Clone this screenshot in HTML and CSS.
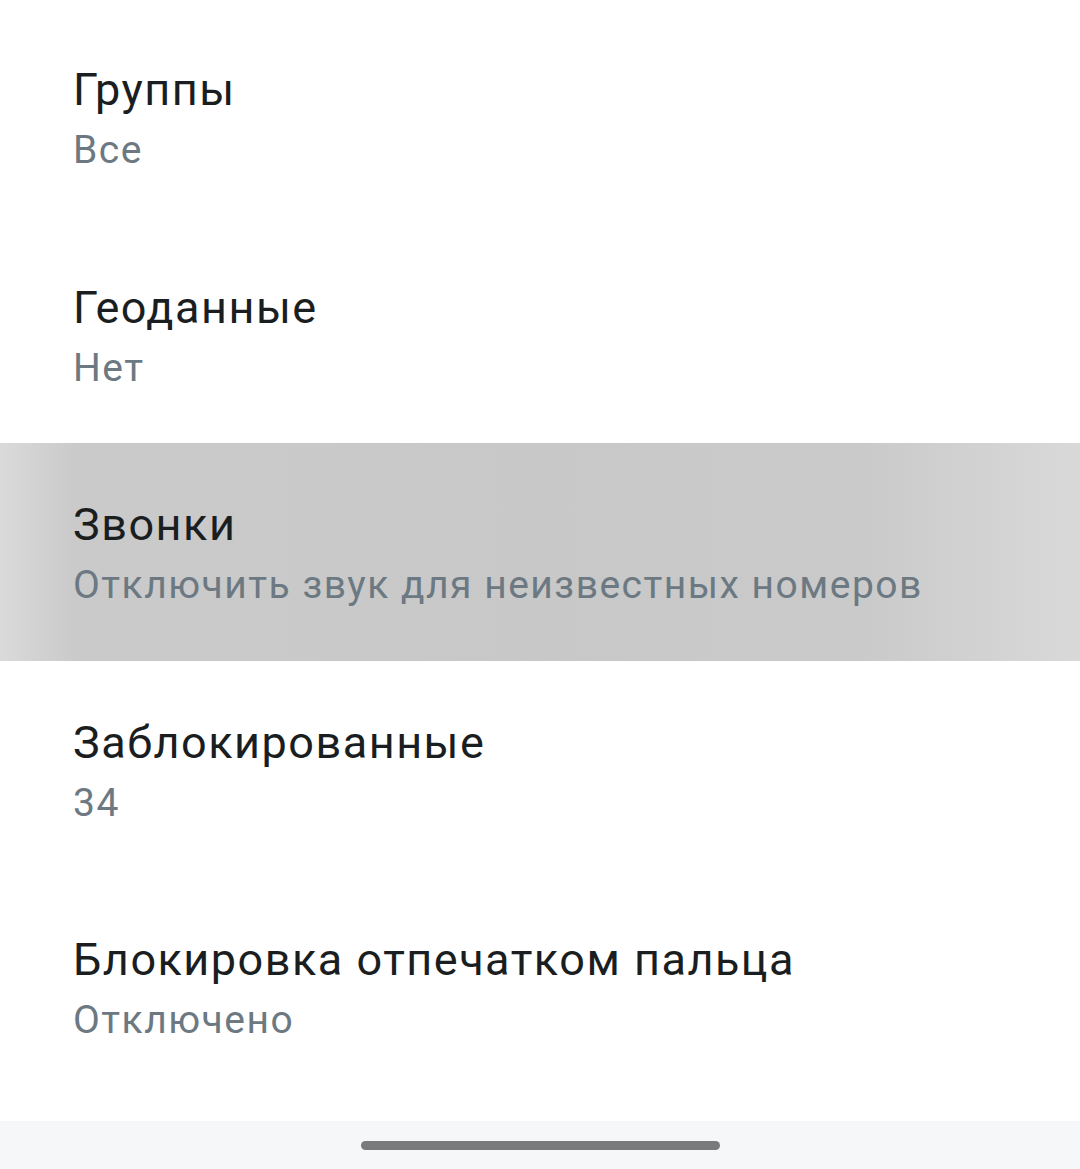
FILE: index.html
```html
<!DOCTYPE html>
<html lang="ru">
<head>
<meta charset="utf-8">
<link rel="stylesheet" href="styles.css">
</head>
<body>
<div class="screen">
  <ul class="list">
    <li class="item"><div class="title">Группы</div><div class="sub">Все</div></li>
    <li class="item"><div class="title">Геоданные</div><div class="sub">Нет</div></li>
    <li class="item pressed"><div class="title">Звонки</div><div class="sub">Отключить звук для неизвестных номеров</div></li>
    <li class="item"><div class="title">Заблокированные</div><div class="sub">34</div></li>
    <li class="item"><div class="title">Блокировка отпечатком пальца</div><div class="sub">Отключено</div></li>
  </ul>
  <div class="navbar"><div class="handle"></div></div>
</div>
</body>
</html>
```
FILE: styles.css
```css
html, body {
  margin: 0;
  padding: 0;
  background: #ffffff;
}
.screen {
  width: 1080px;
  height: 1169px;
  display: flex;
  flex-direction: column;
  font-family: Roboto, "Noto Sans", sans-serif;
}
.list {
  list-style: none;
  margin: 0;
  padding: 8px 0 0 0;
  flex: 1;
}
.item {
  height: 217.5px;
  box-sizing: border-box;
  padding: 52px 0 0 73px;
}
.title {
  font-size: 45px;
  line-height: 60px;
  letter-spacing: 1.5px;
  color: #1a1e21;
}
.sub {
  font-size: 39px;
  line-height: 60px;
  letter-spacing: 1.5px;
  color: #6c7982;
}
.pressed {
  background: linear-gradient(90deg, #dadada 0%, #cacaca 7%, #c8c8c8 50%, #cacaca 80%, #d9d9d9 100%);
}
.navbar {
  height: 48px;
  background: #f6f7f9;
  display: flex;
  justify-content: center;
  align-items: center;
}
.handle {
  width: 359px;
  height: 9px;
  border-radius: 5px;
  background: #797a7c;
}
```
